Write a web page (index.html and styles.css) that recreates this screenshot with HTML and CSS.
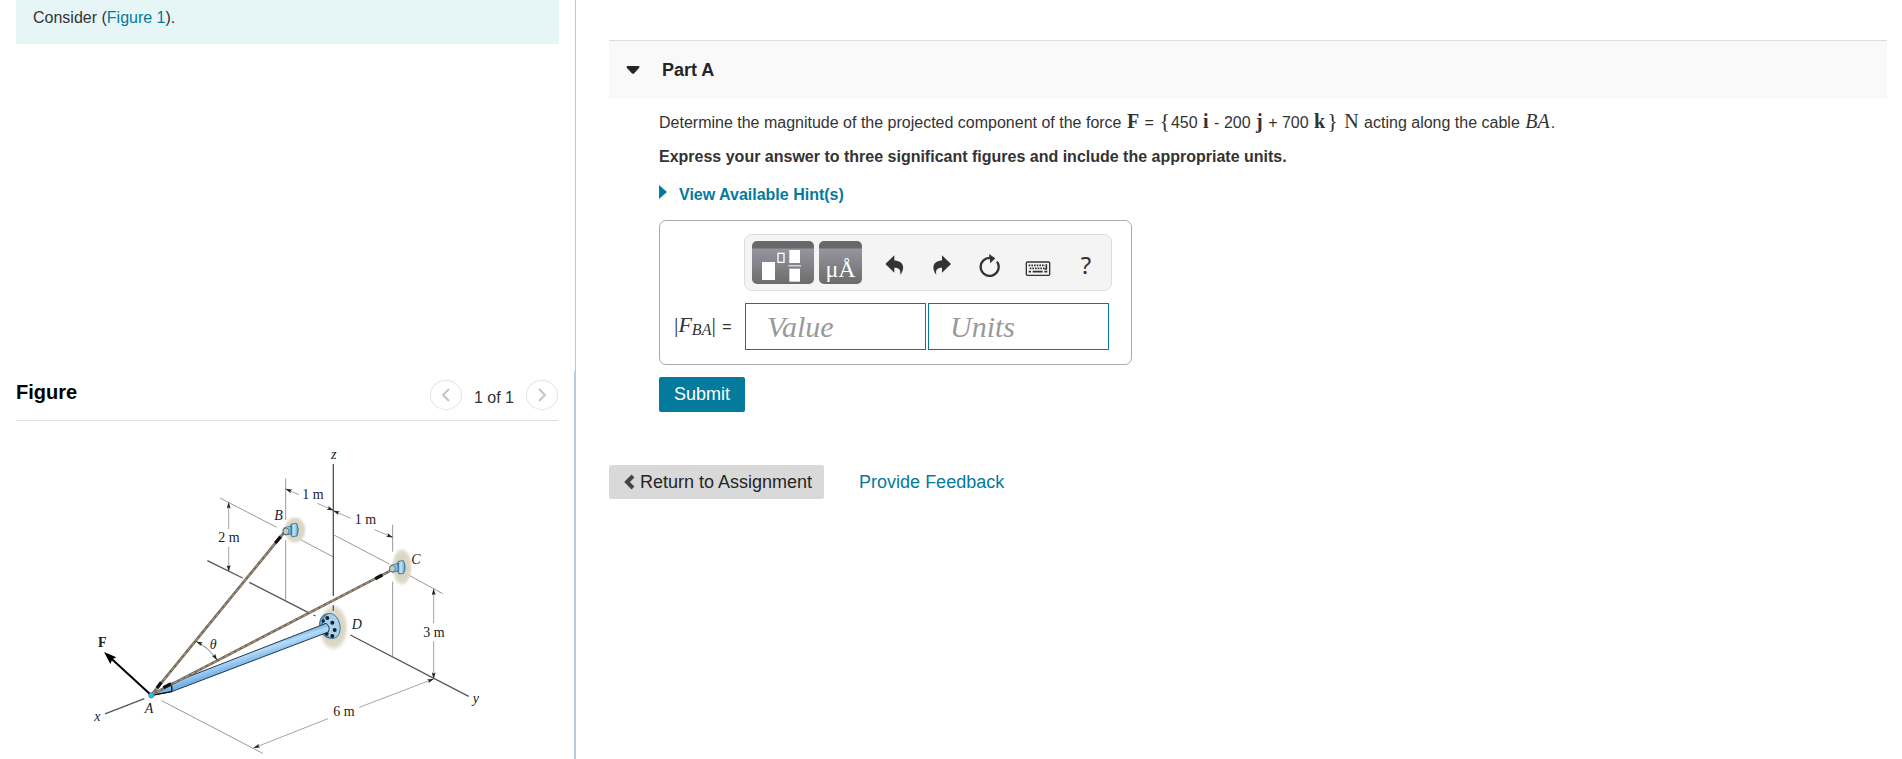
FILE: index.html
```html
<!DOCTYPE html>
<html lang="en">
<head>
<meta charset="utf-8">
<title>Part A</title>
<link rel="stylesheet" href="styles.css">
</head>
<body>
<div class="page">
  <aside class="side">
    <section class="intro">
      <p class="banner">Consider (<a href="#figure">Figure 1</a>).</p>
    </section>
    <section class="figure-pane" id="figure">
      <header class="figure-head">
        <h2>Figure</h2>
        <nav class="pager">
          <button type="button" class="round" aria-label="Previous figure">
            <svg width="10" height="16" viewBox="0 0 10 16"><path d="M8 2 2 8l6 6"/></svg>
          </button>
          <span>1 of 1</span>
          <button type="button" class="round" aria-label="Next figure">
            <svg width="10" height="16" viewBox="0 0 10 16"><path d="m2 2 6 6-6 6"/></svg>
          </button>
        </nav>
      </header>
      <svg class="diagram" viewBox="0 0 1260 950" role="img" aria-label="Boom AD held by cables AB and AC">
        <defs>
          <linearGradient id="boom" x1="500" y1="625" x2="514" y2="668" gradientUnits="userSpaceOnUse">
            <stop offset="0" stop-color="#6aa6d8"/><stop offset=".4" stop-color="#b4dcfa"/><stop offset="1" stop-color="#74b2e6"/>
          </linearGradient>
          <linearGradient id="bolt" x1="0" y1="0" x2="1" y2="0">
            <stop offset="0" stop-color="#4f93bd"/><stop offset=".5" stop-color="#c3e6f8"/><stop offset="1" stop-color="#4d9fcf"/>
          </linearGradient>
          <radialGradient id="wall">
            <stop offset="0" stop-color="#cfcab6"/><stop offset=".75" stop-color="#dedaca"/><stop offset="1" stop-color="#dedaca" stop-opacity="0"/>
          </radialGradient>
          <marker id="tip" viewBox="0 0 20 12" refX="19" refY="6" markerWidth="20" markerHeight="12" markerUnits="userSpaceOnUse" orient="auto-start-reverse">
            <path d="M0 0 20 6 0 12 4 6Z" fill="#222"/>
          </marker>
        </defs>
        <g class="faint">
          <path d="M617 115V240M617 300V480M420 174 590 262M658 297 760 351M760 284 928 372M980 402 1088 461M938 254V335M938 425V650M245 782 548 940"/>
        </g>
        <g class="axis">
          <path d="M760 72V468M382 362 488 414M508 427 684 517M700 525 707 528M811 585 1166 769M75 822 193 776"/>
        </g>
        <g class="dim">
          <path d="M657 164 617 147" marker-end="url(#tip)"/>
          <path d="M712 190 760 211" marker-end="url(#tip)"/>
          <path d="M812 235 760 212" marker-end="url(#tip)"/>
          <path d="M883 269 938 292" marker-end="url(#tip)"/>
          <path d="M446 268V187" marker-end="url(#tip)"/>
          <path d="M446 320V394" marker-end="url(#tip)"/>
          <path d="M1061 550V447" marker-end="url(#tip)"/>
          <path d="M1061 604V716" marker-end="url(#tip)"/>
          <path d="M744 836 521 924" marker-end="url(#tip)"/>
          <path d="M838 802 1061 717" marker-end="url(#tip)"/>
        </g>
        <ellipse cx="645" cy="270" rx="35" ry="43" fill="url(#wall)"/>
        <ellipse cx="966" cy="381" rx="32" ry="59" fill="url(#wall)"/>
        <ellipse cx="760" cy="563" rx="46" ry="72" fill="url(#wall)"/>
        <path d="M760 496V512" stroke="#555" stroke-width="4"/>
        <ellipse cx="746" cy="558" rx="27" ry="37" transform="rotate(-12 746 558)" fill="#5fa4d0" stroke="#24506e" stroke-width="2"/>
        <ellipse cx="754" cy="558" rx="26" ry="38" transform="rotate(-12 754 558)" fill="#a5d2ef" stroke="#24506e" stroke-width="2"/>
        <g fill="#1d1d24">
          <circle cx="742" cy="534" r="6"/><circle cx="757" cy="548" r="6"/><circle cx="764" cy="570" r="6"/>
          <circle cx="757" cy="588" r="6"/><circle cx="740" cy="581" r="6"/><circle cx="730" cy="543" r="5"/>
        </g>
        <path d="M215 766 272 731 738 550Q752 560 745 576L275 755Z" fill="url(#boom)" stroke="#25384a" stroke-width="3"/>
        <path d="M272 731Q278 744 275 755M215 766 275 755" fill="none" stroke="#111" stroke-width="4"/>
        <g class="cable">
          <path d="M215 764 612 278"/><path d="M215 764 932 392"/>
        </g>
        <g class="strand">
          <path d="M215 764 612 278"/><path d="M215 764 932 392"/>
        </g>
        <path d="M586 309 602 290M886 416 907 405M231 744 244 727M250 743 273 731" stroke="#111" stroke-width="10"/>
        <g stroke="#24506e" stroke-width="2" fill="url(#bolt)">
          <path d="M634 252 650 250Q659 268 651 288L636 290Q624 271 634 252Z"/>
          <path d="M613 263 634 258V282L615 285Q604 274 613 263Z"/>
          <ellipse cx="618" cy="274" rx="9" ry="10" fill="#c9c9bf"/>
          <path d="M955 364 970 362Q980 381 971 400L957 402Q945 382 955 364Z"/>
          <path d="M933 376 955 370V393L936 397Q924 387 933 376Z"/>
          <ellipse cx="937" cy="386" rx="9" ry="10" fill="#c9c9bf"/>
        </g>
        <path d="M349 605Q386 622 411 660" class="arc" marker-start="url(#tip)" marker-end="url(#tip)"/>
        <path d="M213 765 92 654" stroke="#000" stroke-width="6"/>
        <path d="M72 636 109 652 97 658 91 672Z" fill="#000"/>
        <circle cx="214" cy="766" r="8" fill="#35b8e6" stroke="#147fa8" stroke-width="2"/>
        <g class="labels">
          <text x="667" y="177">1 m</text><text x="824" y="253">1 m</text>
          <text x="415" y="305">2 m</text><text x="1030" y="592">3 m</text><text x="760" y="829">6 m</text>
          <text x="54" y="622" class="bold">F</text>
          <g class="it">
            <text x="753" y="58">z</text><text x="583" y="241">B</text><text x="994" y="372">C</text>
            <text x="815" y="566">D</text><text x="194" y="820">A</text><text x="43" y="843">x</text>
            <text x="1178" y="788">y</text><text x="389" y="626">θ</text>
          </g>
        </g>
      </svg>
    </section>
  </aside>

  <main class="main">
    <header class="part-head">
      <svg width="14" height="8" viewBox="0 0 14 8"><path d="M1 0H13Q14 1 13 2L8 7.500Q7 8 6 7.500L1 2Q0 1 1 0Z" fill="#252525"/></svg>
      <h1>Part A</h1>
    </header>
    <div class="part-body">
      <p class="question">Determine the magnitude of the projected component of the force <b class="math">F</b> = <span class="math brace">{</span>450 <b class="math">i</b> - 200 <b class="math">j</b> + 700 <b class="math">k</b><span class="math brace">}</span> <span class="math">N</span> acting along the cable <i class="math">BA</i>.</p>
      <p class="express">Express your answer to three significant figures and include the appropriate units.</p>
      <a class="hints" href="#hints">
        <svg width="8" height="14" viewBox="0 0 8 14"><path d="M0 0 8 7 0 14Z" fill="#047a9c"/></svg>
        View Available Hint(s)
      </a>
      <form class="answer">
        <div class="toolbar">
          <button type="button" class="palette wide" aria-label="Templates">
            <svg width="62" height="43" viewBox="0 0 186 129">
              <g fill="#fff"><rect x="30" y="63" width="39" height="54"/><rect x="112" y="27" width="32" height="39"/><rect x="112" y="83" width="32" height="39"/><rect x="109" y="73" width="38" height="3"/></g>
              <rect x="78" y="37" width="18" height="27" fill="none" stroke="#fff" stroke-width="4"/>
            </svg>
          </button>
          <button type="button" class="palette units" aria-label="Symbols">μÅ</button>
          <div class="tools">
            <button type="button" aria-label="Undo">
              <svg width="28" height="30" viewBox="421 52 84 90"><path d="M437 100 464 74V89C493 92 497 113 482 133 484 117 479 111 464 111V126Z" fill="#333"/></svg>
            </button>
            <button type="button" aria-label="Redo">
              <svg width="28" height="30" viewBox="565 52 84 90"><path d="M634 100 607 74V89C578 92 575 113 590 133 587 117 592 111 607 111V126Z" fill="#333"/></svg>
            </button>
            <button type="button" aria-label="Reset">
              <svg width="28" height="30" viewBox="712 52 84 90"><path d="M757 82A27 27 0 1 0 775 93" fill="none" stroke="#333" stroke-width="7"/><path d="M751 70 770 83 755 98Z" fill="#333"/></svg>
            </button>
            <button type="button" aria-label="Keyboard">
              <svg width="28" height="30" viewBox="855 52 84 90">
                <rect x="862" y="94" width="70" height="40" rx="3" fill="none" stroke="#333" stroke-width="4"/>
                <path d="M869 104H918M872 113H916" stroke="#333" stroke-width="5" stroke-dasharray="5 3"/>
                <path d="M869 123H876M881 123H911M916 123H925M922 101V115H916" fill="none" stroke="#333" stroke-width="5"/>
              </svg>
            </button>
            <button type="button" class="help" aria-label="Help">?</button>
          </div>
        </div>
        <label class="lhs" for="value"><span class="math">|<i>F</i><sub>BA</sub>|</span> =</label>
        <div class="fields">
          <input id="value" type="text" placeholder="Value">
          <input type="text" placeholder="Units" aria-label="Units">
        </div>
      </form>
      <button type="button" class="submit">Submit</button>
    </div>
    <footer class="actions">
      <button type="button" class="return">
        <svg width="11" height="16" viewBox="0 0 11 16"><path d="M9 2 3 8l6 6" fill="none" stroke="#444" stroke-width="4"/></svg>
        Return to Assignment
      </button>
      <a href="#feedback">Provide Feedback</a>
    </footer>
  </main>
</div>
</body>
</html>
```
FILE: styles.css
```css
* { box-sizing: border-box; }
body {
  margin: 0;
  background: #fff;
  color: #333;
  font: 16px/24px "Liberation Sans", Arial, sans-serif;
}
h1, h2, p { margin: 0; }
a { color: #047a9c; text-decoration: none; }
button, input { font: inherit; margin: 0; }
button { cursor: pointer; border: 0; padding: 0; }
svg { display: block; }

.page {
  display: grid;
  grid-template-columns: minmax(0, 576fr) minmax(0, 1326fr);
  min-height: 100vh;
}

/* Left column */
.side { display: grid; grid-template-rows: 371fr 388fr; }
.intro { padding: 0 16px; border-right: 1px solid #bcc8d6; }
.banner { padding: 8px 17px 16px; background: #e6f6f7; line-height: 20px; }
.figure-pane { padding: 0 16px; border-right: 2px solid #b5cce2; }
.figure-head {
  display: flex;
  justify-content: space-between;
  align-items: flex-start;
  padding: 9px 0 10px;
  border-bottom: 1px solid #ddd;
}
.figure-head h2 { color: #000; font-size: 20px; line-height: 24px; }
.pager { display: flex; align-items: flex-end; gap: 12px; height: 30px; }
.round {
  display: grid;
  place-items: center;
  width: 32px;
  height: 30px;
  border: 1px solid #e4e4e4;
  border-radius: 50%;
  background: #fff;
}
.round path { fill: none; stroke: #c4c4c4; stroke-width: 2; }

.diagram { width: calc(100% - 64px); max-width: 420px; margin: 19px 0 0 64px; }
.faint, .dim, .axis, .arc { fill: none; }
.faint { stroke: #999; stroke-width: 3; }
.dim { stroke: #777; stroke-width: 2; }
.axis { stroke: #555; stroke-width: 4; }
.arc { stroke: #333; stroke-width: 2; }
.cable { stroke: #766859; stroke-width: 8; }
.strand { stroke: #b3a48f; stroke-width: 3; stroke-dasharray: 12 7; }
.labels { fill: #222; font: 42px "Liberation Serif", serif; }
.labels .it { font-style: italic; }
.labels .bold { font-weight: bold; }

/* Right column */
.main { padding: 40px 15px 0 33px; }
.part-head {
  display: flex;
  align-items: center;
  gap: 22px;
  height: 59px;
  padding-left: 17px;
  border-top: 1px solid #ddd;
  background: #f9f9f9;
}
.part-head h1 { color: #252525; font-size: 18px; line-height: 24px; }
.part-body { padding: 12px 0 0 50px; }
.math { font-family: "Liberation Serif", "Times New Roman", serif; font-size: 20px; line-height: 20px; }
.question .math { margin: 0 1px; }
.brace { font-size: 22px; line-height: 20px; }
.express { margin-top: 10px; font-weight: bold; }
.hints { display: flex; gap: 12px; width: fit-content; margin-top: 14px; font-weight: bold; }
.hints svg { margin-top: 2px; }

.answer {
  display: grid;
  grid-template-columns: 70px auto;
  row-gap: 12px;
  width: fit-content;
  margin-top: 13px;
  padding: 13px 19px 14px 14px;
  border: 1px solid #aaa;
  border-radius: 7px;
}
.toolbar {
  display: flex;
  grid-column: 2;
  gap: 5px;
  padding: 6px 1px 6px 7px;
  border: 1px solid #ddd;
  border-radius: 8px;
  background: #f4f4f4;
}
.palette {
  width: 43px;
  height: 43px;
  border-radius: 5px;
  background: linear-gradient(#686868 0 7px, #9695a0 8px, #6c6c6c);
  color: #fff;
}
.wide { width: 62px; }
.units { padding-top: 12px; font: 24px/30px "Liberation Serif", serif; }
.tools { display: flex; margin-left: 3px; }
.tools button { display: grid; place-items: center; width: 48px; background: none; color: #333; }
.tools .help { padding-top: 4px; font: 24px/30px "Noto Sans", sans-serif; }
.lhs { align-self: center; white-space: nowrap; }
.lhs .math { font-size: 22px; margin-right: 2px; }
.lhs sub { font-size: 16px; font-style: italic; line-height: 0; vertical-align: -3px; }
.fields { display: flex; gap: 2px; padding: 0 3px 0 1px; }
.fields input {
  width: 181px;
  height: 47px;
  padding: 0 21px;
  border: 1px solid #047a9c;
  background: #fff;
  color: #333;
  font: italic 30px/36px "Liberation Serif", "Times New Roman", serif;
}
.fields input::placeholder { color: #999; opacity: 1; }

.submit {
  display: block;
  margin-top: 12px;
  padding: 5px 15px 6px;
  border-radius: 2px;
  background: #047a9c;
  color: #fff;
  font-size: 18px;
}
.actions { display: flex; align-items: center; gap: 35px; margin-top: 53px; font-size: 18px; }
.return {
  display: flex;
  align-items: center;
  gap: 5px;
  padding: 5px 12px 5px 15px;
  border-radius: 2px;
  background: #d9d9d9;
  color: #252525;
}
```
